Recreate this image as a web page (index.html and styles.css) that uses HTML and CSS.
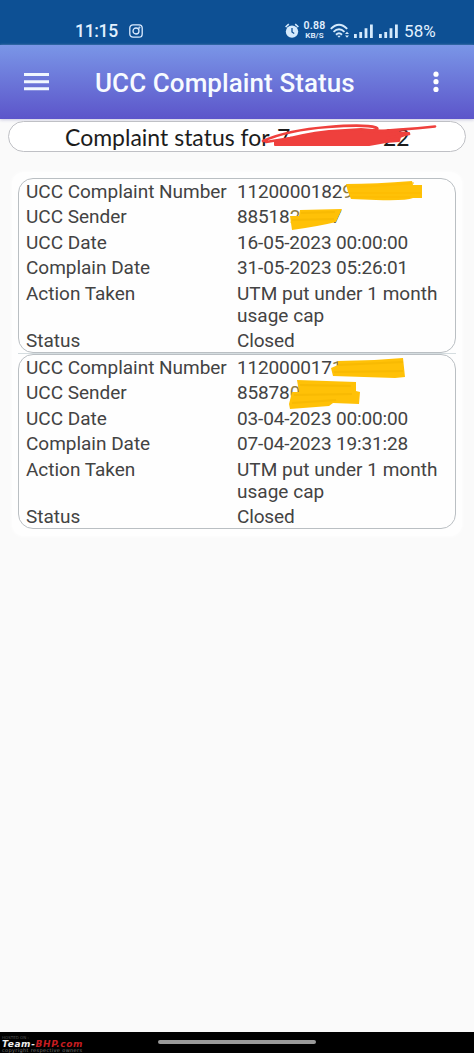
FILE: index.html
```html
<!DOCTYPE html>
<html lang="en">
<head>
<meta charset="utf-8">
<title>UCC Complaint Status</title>
<link rel="stylesheet" href="styles.css">
</head>
<body>
<div class="screen">
  <div class="statusbar">
    <span class="time">11:15</span>
    <svg class="insta" width="14" height="14" viewBox="0 0 14 14" fill="none" stroke="#dcebff" stroke-width="1.3"><rect x=".8" y=".8" width="12.4" height="12.4" rx="3.2"/><circle cx="7" cy="7" r="3"/><circle cx="10.4" cy="3.6" r=".4"/></svg>
    <svg class="alarm" width="14" height="16" viewBox="0 0 14 16"><circle cx="7" cy="8.6" r="6.2" fill="#d5eafc"/><path d="M.6 4 3.8 1.2M13.4 4 10.2 1.2" stroke="#d5eafc" stroke-width="1.6"/><path d="M7 5v4l2.2 1.5" fill="none" stroke="#0d4f94" stroke-width="1.3"/></svg>
    <div class="speed"><span class="rate">0.88</span><span class="unit">KB/S</span></div>
    <svg class="wifi" width="20" height="16" viewBox="0 0 20 16" fill="none" stroke="#d5eafc" stroke-width="1.9"><path d="M.8 5.8Q9-2.4 17.2 5.8M3.5 8.9Q9 3.6 14.5 8.9M6 11.7Q9 9 12 11.7"/><path d="M7.3 12.7h3.4L9 14.7z" fill="#d5eafc" stroke="none"/><path d="m15 11 2-2.3 2 2.3zM15 12.5h4l-2 2.3z" fill="#d5eafc" stroke="none"/></svg>
    <svg class="signal" width="19" height="14" viewBox="0 0 19 14" fill="#d5eafc"><path d="M0 10h2.8v4H0zM5.3 8h2.8v6H5.3zM10.6 4.3h2.8V14h-2.8zM16 .5h2.8V14H16z"/></svg>
    <svg class="signal second" width="19" height="14" viewBox="0 0 19 14" fill="#d5eafc"><path d="M0 10h2.8v4H0zM5.3 8h2.8v6H5.3zM10.6 4.3h2.8V14h-2.8zM16 .5h2.8V14H16z"/></svg>
    <span class="battery">58%</span>
  </div>
  <header class="appbar">
    <svg class="menu" width="25" height="18" viewBox="0 0 25 18" fill="#f0f7ff"><path d="M0 0h25v3H0zM0 7.2h25v3H0zM0 14.3h25v3H0z"/></svg>
    <h1 class="title">UCC Complaint Status</h1>
    <svg class="more" width="6" height="22" viewBox="0 0 6 22" fill="#fff"><circle cx="3" cy="3.2" r="2.6"/><circle cx="3" cy="10.7" r="2.6"/><circle cx="3" cy="18.4" r="2.6"/></svg>
  </header>
  <div class="subject">
    <span class="subject-text">Complaint status for</span><span class="phone-start">7</span><span class="phone-end">22</span>
    <svg class="scribble" width="180" height="28" viewBox="0 0 180 28"><path d="M14 19Q40 11 68 8L100 6L148 10L139 14L138 18L125 19L108 22L14 22Z" fill="#ef403d" stroke="#ef403d" stroke-width="2" stroke-linejoin="round"/><path d="M2 18Q27 7 67 4Q104 1 115 4.500Q121 7 100 9Q140 7 174 3.500M148 11L126 15M5 19L30 15" fill="none" stroke="#ef403d" stroke-width="2.700" stroke-linecap="round"/></svg>
  </div>
  <main class="results">
    <section class="card">
      <dl class="record">
        <dt>UCC Complaint Number</dt><dd>1120000182<span class="faint">9</span></dd>
        <dt>UCC Sender</dt><dd>88518<span class="faint">2</span><span class="gap-one">7</span></dd>
        <dt>UCC Date</dt><dd>16-05-2023 00:00:00</dd>
        <dt>Complain Date</dt><dd>31-05-2023 05:26:01</dd>
        <dt>Action Taken</dt><dd class="words">UTM put under 1 month usage cap</dd>
        <dt>Status</dt><dd>Closed</dd>
      </dl>
      <svg class="marker" width="200" height="60" viewBox="0 0 200 60"><path d="M117 5Q147 5 183 2L184 6L193 6L193 19L184 19Q177 22 147 21L122 20L119 13Z" fill="#ffc107"/><path d="M120 8Q151 7 185 4M120 14H192M122 18H181" fill="none" stroke="#fdb900" stroke-width="2" opacity=".5"/><path d="M71 31L113 30L107 43Q91 47 63 51L61 37L70 37Z" fill="#ffc107"/><path d="M72 34L106 33M63 41L105 40" stroke="#f3b400" stroke-width="2" opacity=".5"/></svg>
    </section>
    <div class="divider"></div>
    <section class="card">
      <dl class="record">
        <dt>UCC Complaint Number</dt><dd>112000017<span class="faint">1</span></dd>
        <dt>UCC Sender</dt><dd>85878<span class="faint">0</span></dd>
        <dt>UCC Date</dt><dd>03-04-2023 00:00:00</dd>
        <dt>Complain Date</dt><dd>07-04-2023 19:31:28</dd>
        <dt>Action Taken</dt><dd class="words">UTM put under 1 month usage cap</dd>
        <dt>Status</dt><dd>Closed</dd>
      </dl>
      <svg class="marker" width="200" height="60" viewBox="0 0 200 60"><path d="M109 6Q142 6 174 3L176 22L166 23L104 21L102 13L109 10Z" fill="#ffc107"/><path d="M109 10L174 7M105 17L174 16" stroke="#f3b400" stroke-width="2" opacity=".5"/><path d="M68 25L127 27V36L131 37L130 49L104 48L100 51L61 54L60 49L63 37L70 37Z" fill="#ffc107"/><path d="M71 30L122 31M65 40L123 39M63 48L107 45" stroke="#f3b400" stroke-width="2" opacity=".5"/></svg>
    </section>
  </main>
  <footer class="navbar">
    <div class="credit"><span class="credit-top">HOSTED ON :</span><span class="credit-name">Team-<b>BHP.com</b></span><span class="credit-copy">copyright respective owners</span></div>
    <div class="handle"></div>
  </footer>
</div>
</body>
</html>
```
FILE: styles.css
```css
* { box-sizing: border-box; }
body { margin: 0; font-family: Roboto, sans-serif; background: #fafafa; }
.screen { width: 474px; height: 1053px; display: flex; flex-direction: column; background: #fafafa; overflow: hidden; }
.statusbar { height: 45px; padding: 16px 0 0 75px; display: flex; align-items: center; background: #0d5094; color: #e2f1ff; flex: none; }
.time { width: 54px; font-size: 17.5px; font-weight: 500; line-height: 28px; letter-spacing: -.3px; }
.insta { margin-right: 142px; }
.alarm { margin-right: 4px; }
.speed { width: 23px; display: flex; flex-direction: column; align-items: center; font-weight: 600; white-space: nowrap; }
.rate { font-size: 10.5px; line-height: 9.5px; letter-spacing: .2px; }
.unit { font-size: 8px; line-height: 9px; letter-spacing: .1px; }
.wifi { margin-left: 4px; }
.signal { margin-left: 4px; }
.second { margin-left: 6px; }
.battery { margin-left: 6px; font-size: 17px; line-height: 28px; letter-spacing: .1px; }
.appbar { height: 74px; padding: 0 35px 0 24px; display: flex; align-items: center; background: linear-gradient(#7a96e7, #5c55ca); flex: none; box-shadow: 0 1px 3px #c9c9e0; }
.title { margin: 2px 0 0 46px; flex: 1; font-size: 26px; font-weight: 500; line-height: 32px; letter-spacing: .08px; color: #f7fbff; white-space: nowrap; }
.subject { position: relative; height: 31px; margin: 2px 8px 0; padding: 2px 0 0 56px; border: 1px solid #bfc0c5; border-radius: 16px; background: #fff; display: flex; align-items: center; font-family: Lato, sans-serif; font-size: 23px; line-height: 27px; color: #1c1c1c; white-space: nowrap; flex: none; }
.subject-text { width: 212px; }
.phone-start { width: 106px; }
.scribble { position: absolute; left: 252px; top: 1px; }
.results { margin: 20px 12px 0; padding: 6px 6px 7px; border-radius: 12px; background: #fefefe; box-shadow: 0 0 4px #fff; }
.card { position: relative; height: 175px; padding: 2px 0 0 7px; border: 1px solid #babfc3; border-radius: 15px; background: #fefefe; }
.divider { height: 1px; background: #d5dde0; }
.record { margin: 0; display: grid; grid-template-columns: 211px 210px; row-gap: 3.5px; font-size: 19px; line-height: 21.9px; color: #434343; }
.record dt, .record dd { margin: 0; }
.record dt { letter-spacing: -.02px; }
.record dd { letter-spacing: -.15px; }
.record .words { letter-spacing: .02px; }
.faint { color: #8d7b43; }
.gap-one { margin-left: 31px; }
.marker { position: absolute; left: 210px; top: 0; }
.navbar { position: relative; height: 21px; margin-top: auto; padding: 8px 0 0 158px; background: #000; flex: none; }
.handle { width: 158px; height: 4px; border-radius: 2px; background: #999; }
.credit { position: absolute; left: 2px; top: 4px; display: flex; flex-direction: column; font-family: "DejaVu Sans", sans-serif; white-space: nowrap; }
.credit-top { font-size: 4px; line-height: 4px; color: #555; }
.credit-name { font-size: 9px; line-height: 8px; font-weight: 700; font-style: italic; letter-spacing: .65px; color: #eee; }
.credit-name b { color: #c51d20; }
.credit-copy { font-size: 5px; line-height: 4px; letter-spacing: .35px; color: #777; }
```
